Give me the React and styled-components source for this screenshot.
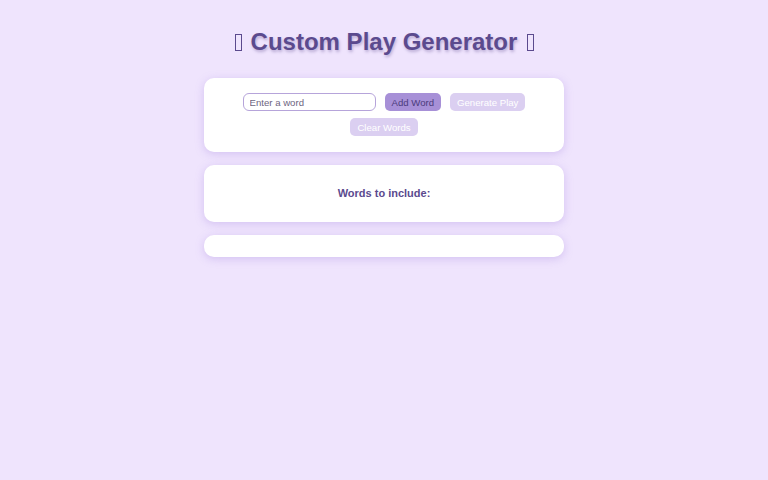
import React, { useState } from 'react';
import styled, { createGlobalStyle } from 'styled-components';

/*
 * styled components
 */

const GlobalStyle = createGlobalStyle`
  html, body {
    margin: 0;
    padding: 0;
    background-color: #efe4fd;
    font-family: "Liberation Sans", Arial, sans-serif;
  }
`;

const AppWrapper = styled.div`
  display: flex;
  flex-direction: column;
  align-items: center;
  min-height: 480px;
  padding: 28px 0 0;
  box-sizing: border-box;
`;

const Title = styled.h1`
  color: #5b4a8e;
  font-size: 24px;
  font-weight: bold;
  margin: 0 0 22px;
  line-height: 28px;
  text-shadow: 1px 2px 3px rgba(90, 70, 140, 0.35);
`;

const GlyphBox = styled.span`
  border: 1.5px solid #5b4a8e;
  box-sizing: border-box;
  display: inline-block;
  height: 17px;
  margin: 0 2px 0 3px;
  vertical-align: -1px;
  width: 7px;
`;

const Card = styled.section`
  background-color: #ffffff;
  border-radius: 10px;
  box-shadow: 0 2px 8px rgba(160, 130, 220, 0.35);
  box-sizing: border-box;
  display: flex;
  flex-direction: column;
  align-items: center;
  margin-bottom: 13px;
  min-height: ${(props) => props.minHeight || 22}px;
  padding: ${(props) => props.padding || '0'};
  width: 360px;
`;

const Controls = styled.div`
  display: flex;
  flex-wrap: wrap;
  justify-content: center;
  gap: 7px 9px;
  width: 300px;
`;

const WordInput = styled.input`
  border: 1.5px solid #b6a4da;
  border-radius: 6px;
  box-sizing: border-box;
  color: #5b4a8e;
  font-family: inherit;
  font-size: 9.6px;
  height: 18px;
  outline: none;
  padding: 0 6px;
  width: 133px;

  &::placeholder {
    color: #6d6480;
  }
`;

const Button = styled.button`
  background-color: ${(props) => (props.disabled ? '#dbcff1' : '#a790d7')};
  border: none;
  border-radius: 5px;
  box-sizing: border-box;
  color: ${(props) => (props.disabled ? '#ffffff' : '#4b3b7c')};
  cursor: ${(props) => (props.disabled ? 'default' : 'pointer')};
  font-family: inherit;
  font-size: 9.6px;
  height: 18px;
  padding: 0 7px;
`;

const SectionHeading = styled.h3`
  color: #5b4a8e;
  font-size: 11px;
  font-weight: bold;
  line-height: 14px;
  margin: 0;
`;

export default function App() {

  const [word, setWord] = useState('');
  const [words, setWords] = useState([]);

  const addWord = () => {
    const trimmed = word.trim();
    if (!trimmed) return;
    setWords([...words, trimmed]);
    setWord('');
  };

  return (
    <>
      <GlobalStyle />
      <AppWrapper>
        <Title>
          <GlyphBox aria-hidden="true" /> Custom Play Generator <GlyphBox aria-hidden="true" />
        </Title>
        <Card padding="15px 0 16px">
          <Controls>
            <WordInput
                placeholder="Enter a word"
                value={word}
                onChange={(e) => setWord(e.target.value)} />
            <Button onClick={addWord}>Add Word</Button>
            <Button disabled={!words.length}>Generate Play</Button>
            <Button disabled={!words.length} onClick={() => setWords([])}>Clear Words</Button>
          </Controls>
        </Card>
        <Card minHeight={57} padding="21px 0 22px">
          <SectionHeading>Words to include:</SectionHeading>
          {words.map((w) => <span key={w}>{w}</span>)}
        </Card>
        <Card minHeight={22} />
      </AppWrapper>
    </>
  );
}
